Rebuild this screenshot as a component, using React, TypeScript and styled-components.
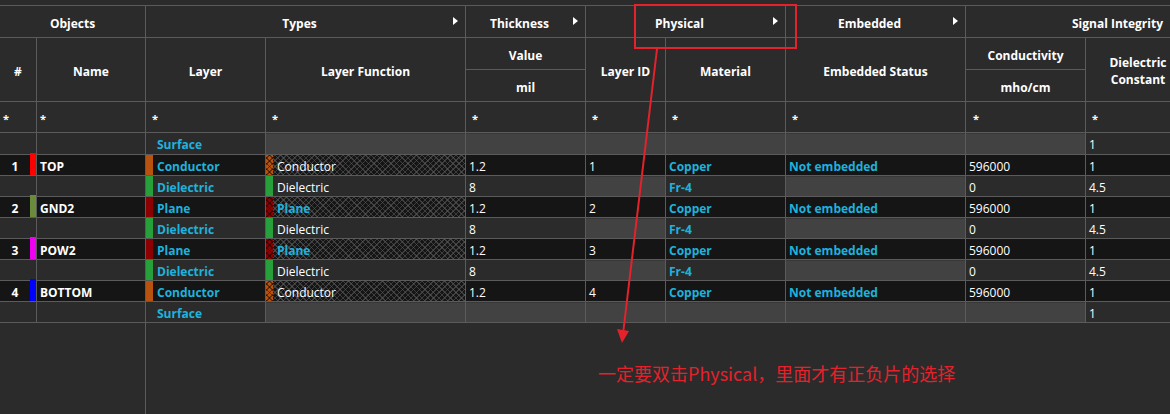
import React from 'react';
import styled, { createGlobalStyle, css } from 'styled-components';

const LINE = '#5b5b5b';
const BG = '#2b2b2b';
const DARK = '#151515';
const GRAY = '#424242';
const CYAN = '#1cb3de';
const RED = '#e3222b';

const GlobalStyle = createGlobalStyle`
  html, body { margin: 0; padding: 0; background: ${BG}; }
  body { overflow: hidden; width: 1170px; height: 414px; }
`;

const Page = styled.div`
  position: relative;
  width: 1170px;
  height: 414px;
  overflow: hidden;
  padding-top: 5px;
  box-sizing: border-box;
  background: ${BG};
  font-family: "Open Sans", "Noto Sans", sans-serif;
  font-size: 12px;
  color: #fff;
`;

const Grid = styled.div`
  display: grid;
  grid-template-columns: 36px 108px 119px 199px 119px 79px 119px 179px 119px 104px 78px 160px;
  grid-template-rows: 31px 31px 31px 30px 21px repeat(8, 20px) 1fr;
  gap: 1px;
  padding-top: 1px;
  background: ${LINE};
  height: 409px;
  width: max-content;
  box-sizing: border-box;
`;

const HeadCell = styled.div<{ $span?: number; $rows?: number }>`
  grid-column: span ${(p) => p.$span ?? 1};
  grid-row: span ${(p) => p.$rows ?? 1};
  background: ${BG};
  display: flex;
  align-items: center;
  justify-content: center;
  padding-top: 3px;
  box-sizing: border-box;
  font-weight: 700;
  line-height: 17px;
  text-align: center;
  white-space: nowrap;
  overflow: hidden;
`;

const GroupLabel = styled.span`
  flex: 1;
  text-align: center;
`;

const Arrow = styled.span`
  align-self: flex-start;
  margin-top: 8px;
  margin-right: 7px;
  width: 0;
  height: 0;
  border-left: 5px solid #fff;
  border-top: 4.5px solid transparent;
  border-bottom: 4.5px solid transparent;
`;

const FilterCell = styled.div<{ $pad?: number }>`
  background: ${BG};
  display: flex;
  align-items: center;
  padding: 2px 0 0 ${(p) => p.$pad ?? 6}px;
  font-weight: 700;
  font-size: 11px;
`;

type Tone = 'base' | 'dark' | 'gray' | 'hatch';

const hatch = (base: string, line: string) => css`
  background-color: ${base};
  background-image: repeating-linear-gradient(45deg, ${line} 0 1px, transparent 1px 4px),
    repeating-linear-gradient(-45deg, ${line} 0 1px, transparent 1px 4px);
`;

const Cell = styled.div<{ $tone: Tone; $pad?: number }>`
  display: flex;
  align-items: center;
  padding-left: ${(p) => p.$pad ?? 3}px;
  padding-top: 2px;
  box-sizing: border-box;
  white-space: nowrap;
  overflow: hidden;
  ${(p) =>
    p.$tone === 'base'
      ? css`background: ${BG};`
      : p.$tone === 'dark'
      ? css`background: ${DARK};`
      : p.$tone === 'gray'
      ? css`background: ${GRAY}; box-shadow: inset 0 1px 0 #383838;`
      : hatch(DARK, 'rgba(95,95,95,0.55)')}
`;

const NumCell = styled.div<{ $tone: Tone }>`
  display: flex;
  align-items: stretch;
  background: ${(p) => (p.$tone === 'dark' ? DARK : BG)};
  font-weight: 700;
`;

const NumText = styled.span`
  flex: 1;
  display: flex;
  align-items: center;
  justify-content: center;
  padding-top: 2px;
`;

const Swatch = styled.span<{ $color: string; $w?: number; $hatched?: boolean }>`
  flex: none;
  align-self: stretch;
  width: ${(p) => p.$w ?? 7}px;
  margin-top: -2px;
  ${(p) => (p.$hatched ? hatch(p.$color, 'rgba(0,0,0,0.45)') : css`background: ${p.$color};`)}
`;

const Txt = styled.span<{ $accent?: boolean; $bold?: boolean }>`
  margin-left: 4px;
  color: ${(p) => (p.$accent ? CYAN : '#fff')};
  font-weight: ${(p) => (p.$accent || p.$bold ? 700 : 400)};
`;

const PlainTxt = styled.span<{ $accent?: boolean; $bold?: boolean }>`
  color: ${(p) => (p.$accent ? CYAN : '#fff')};
  font-weight: ${(p) => (p.$accent || p.$bold ? 700 : 400)};
`;

const Filler = styled.div<{ $span: string }>`
  grid-column: ${(p) => p.$span};
  background: ${BG};
`;

const Overlay = styled.svg`
  position: absolute;
  left: 0;
  top: 0;
  pointer-events: none;
`;

const Note = styled.div`
  position: absolute;
  left: 598px;
  top: 362px;
  font-family: "Noto Sans CJK SC", "Noto Sans", sans-serif;
  font-size: 18px;
  line-height: 22px;
  color: ${RED};
  white-space: nowrap;
`;

type Kind = 'surface' | 'signal' | 'dielectric' | 'plane';
interface Row {
  kind: Kind;
  num?: string;
  name?: string;
  color?: string;
  id?: string;
}

const rows: Row[] = [
  { kind: 'surface' },
  { kind: 'signal', num: '1', name: 'TOP', color: '#ff0000', id: '1' },
  { kind: 'dielectric' },
  { kind: 'plane', num: '2', name: 'GND2', color: '#6a8a3c', id: '2' },
  { kind: 'dielectric' },
  { kind: 'plane', num: '3', name: 'POW2', color: '#f000f0', id: '3' },
  { kind: 'dielectric' },
  { kind: 'signal', num: '4', name: 'BOTTOM', color: '#0000ff', id: '4' },
  { kind: 'surface' },
];

const ORANGE = '#b8520f';
const GREEN = '#27a03c';
const PLANE = '#8b0000';

function DataRow({ r }: { r: Row }) {
  if (r.kind === 'surface') {
    return (
      <>
        <NumCell $tone="base" />
        <Cell $tone="base" />
        <Cell $tone="base" $pad={0}>
          <Swatch $color="transparent" />
          <Txt $accent>Surface</Txt>
        </Cell>
        <Cell $tone="gray" />
        <Cell $tone="gray" />
        <Cell $tone="gray" />
        <Cell $tone="gray" />
        <Cell $tone="gray" />
        <Cell $tone="gray" />
        <Cell $tone="base"><PlainTxt>1</PlainTxt></Cell>
        <Cell $tone="base" />
        <Cell $tone="base" />
      </>
    );
  }
  if (r.kind === 'dielectric') {
    return (
      <>
        <NumCell $tone="base" />
        <Cell $tone="base" />
        <Cell $tone="base" $pad={0}>
          <Swatch $color={GREEN} />
          <Txt $accent>Dielectric</Txt>
        </Cell>
        <Cell $tone="base" $pad={0}>
          <Swatch $color={GREEN} />
          <Txt>Dielectric</Txt>
        </Cell>
        <Cell $tone="base"><PlainTxt>8</PlainTxt></Cell>
        <Cell $tone="gray" />
        <Cell $tone="base"><PlainTxt $accent>Fr-4</PlainTxt></Cell>
        <Cell $tone="gray" />
        <Cell $tone="base"><PlainTxt>0</PlainTxt></Cell>
        <Cell $tone="base"><PlainTxt>4.5</PlainTxt></Cell>
        <Cell $tone="base" />
        <Cell $tone="base" />
      </>
    );
  }
  const isPlane = r.kind === 'plane';
  const sw = isPlane ? PLANE : ORANGE;
  const label = isPlane ? 'Plane' : 'Conductor';
  return (
    <>
      <NumCell $tone="dark">
        <NumText>{r.num}</NumText>
        <Swatch $color={r.color!} $w={6} />
      </NumCell>
      <Cell $tone="dark"><PlainTxt $bold>{r.name}</PlainTxt></Cell>
      <Cell $tone="dark" $pad={0}>
        <Swatch $color={sw} />
        <Txt $accent>{label}</Txt>
      </Cell>
      <Cell $tone="hatch" $pad={0}>
        <Swatch $color={sw} $hatched />
        <Txt $accent={isPlane}>{label}</Txt>
      </Cell>
      <Cell $tone="dark"><PlainTxt>1.2</PlainTxt></Cell>
      <Cell $tone="dark"><PlainTxt>{r.id}</PlainTxt></Cell>
      <Cell $tone="dark"><PlainTxt $accent>Copper</PlainTxt></Cell>
      <Cell $tone="dark"><PlainTxt $accent>Not embedded</PlainTxt></Cell>
      <Cell $tone="dark"><PlainTxt>596000</PlainTxt></Cell>
      <Cell $tone="dark"><PlainTxt>1</PlainTxt></Cell>
      <Cell $tone="dark" />
      <Cell $tone="dark" />
    </>
  );
}

const filterPads = [3, 3, 6, 6, 6, 6, 6, 6, 7, 6];

export default function App() {
  return (
    <Page>
      <GlobalStyle />
      <Grid>
        {/* group header row */}
        <HeadCell $span={2}><GroupLabel>Objects</GroupLabel></HeadCell>
        <HeadCell $span={2}><GroupLabel>Types</GroupLabel><Arrow /></HeadCell>
        <HeadCell><GroupLabel>Thickness</GroupLabel><Arrow /></HeadCell>
        <HeadCell $span={2}><GroupLabel>Physical</GroupLabel><Arrow /></HeadCell>
        <HeadCell><GroupLabel>Embedded</GroupLabel><Arrow /></HeadCell>
        <HeadCell $span={3}><GroupLabel>Signal Integrity</GroupLabel></HeadCell>
        <HeadCell />

        {/* column header rows */}
        <HeadCell $rows={2}>#</HeadCell>
        <HeadCell $rows={2}>Name</HeadCell>
        <HeadCell $rows={2}>Layer</HeadCell>
        <HeadCell $rows={2}>Layer Function</HeadCell>
        <HeadCell>Value</HeadCell>
        <HeadCell $rows={2}>Layer ID</HeadCell>
        <HeadCell $rows={2}>Material</HeadCell>
        <HeadCell $rows={2}>Embedded Status</HeadCell>
        <HeadCell>Conductivity</HeadCell>
        <HeadCell $rows={2}>Dielectric<br />Constant</HeadCell>
        <HeadCell $rows={2} />
        <HeadCell $rows={2} />
        <HeadCell>mil</HeadCell>
        <HeadCell>mho/cm</HeadCell>

        {/* filter row */}
        {filterPads.map((p, i) => (
          <FilterCell key={i} $pad={p}>*</FilterCell>
        ))}
        <FilterCell />
        <FilterCell />

        {rows.map((r, i) => (
          <DataRow key={i} r={r} />
        ))}

        <Filler $span="1 / 3" />
        <Filler $span="3 / -1" />
      </Grid>

      <Overlay width={1170} height={414} viewBox="0 0 1170 414">
        <rect x={635} y={5} width={161} height={43} fill="none" stroke={RED} strokeWidth={2} />
        <line x1={657} y1={49} x2={623} y2={334} stroke={RED} strokeWidth={2} />
        <polygon points="617,329 629,331 622,343" fill={RED} />
      </Overlay>
      <Note>一定要双击Physical，里面才有正负片的选择</Note>
    </Page>
  );
}
